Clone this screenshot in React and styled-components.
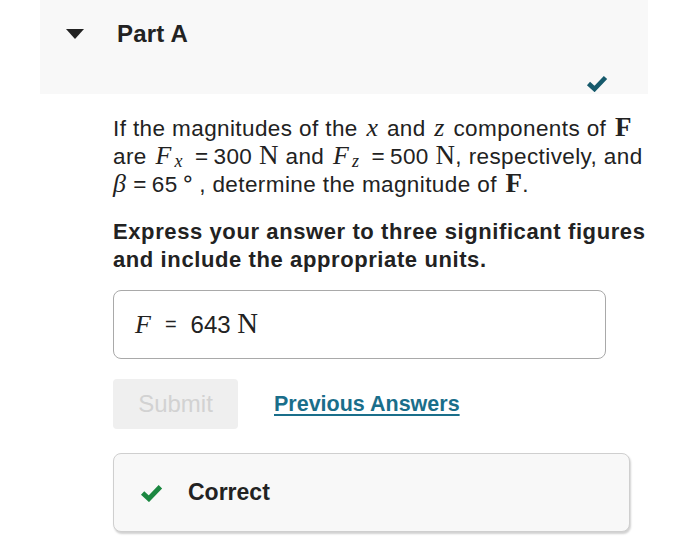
import styled, { createGlobalStyle } from 'styled-components';

const GlobalStyle = createGlobalStyle`
body {
    margin: 0;
    background: #ffffff;
    font-family: "Liberation Sans", Arial, sans-serif;
    color: #222222;
}
`;

const Check = ({ color, width, height }) => (
    <svg width={width} height={height} viewBox="0 0 22 17">
        <polyline points="2.5,8.5 8.5,14 19.5,2.5" fill="none" stroke={color} strokeWidth="4.6" strokeLinejoin="miter" />
    </svg>
);

const App = () => {
    return (
        <Page>
            <GlobalStyle />

            <PartHeader>
                <TitleRow>
                    <Caret />
                    <h2>Part A</h2>
                </TitleRow>
                <StatusRow>
                    <Check color="#165a6c" width={22} height={17} />
                </StatusRow>
            </PartHeader>

            <Content>
                <Question>
                    If the magnitudes of the <Mi $pad>x</Mi> and <Mi $pad>z</Mi> components of <Mb>F</Mb>
                    <br />
                    are <Mi $pad>F</Mi><Sub>x</Sub><Eq>=</Eq>300 <Mr>N</Mr> and <Mi $pad>F</Mi><Sub>z</Sub><Eq>=</Eq>500 <Mr>N</Mr>, respectively, and
                    <br />
                    <Mi>β</Mi><Eq $tight>=</Eq>65<Deg>∘</Deg>, determine the magnitude of <Mb>F</Mb>.
                </Question>

                <Instruction>
                    Express your answer to three significant figures and include the appropriate units.
                </Instruction>

                <AnswerBox>
                    <AnswerVar>F</AnswerVar>
                    <Equals>=</Equals>
                    <span>643 <Mr>N</Mr></span>
                </AnswerBox>

                <ActionRow>
                    <SubmitButton disabled>Submit</SubmitButton>
                    <PrevLink href="#">Previous Answers</PrevLink>
                </ActionRow>

                <Feedback>
                    <Check color="#1b8741" width={23} height={18} />
                    <span>Correct</span>
                </Feedback>
            </Content>
        </Page>
    )
}

const Page = styled.div`
width: 608px;
margin-left: 40px;
padding-bottom: 14px;
`;

const PartHeader = styled.div`
background: #f8f8f8;
height: 94px;
display: flex;
flex-direction: column;
box-sizing: border-box;
padding-top: 19px;
`;

const TitleRow = styled.div`
display: flex;
align-items: center;
padding-left: 26px;
gap: 33px;
height: 30px;

h2 {
    margin: 0;
    font-size: 24px;
    font-weight: 700;
    color: #222222;
    letter-spacing: 0.2px;
}
`;

const Caret = styled.span`
width: 0;
height: 0;
border-left: 9px solid transparent;
border-right: 9px solid transparent;
border-top: 10px solid #222222;
`;

const StatusRow = styled.div`
display: flex;
justify-content: flex-end;
padding-right: 40px;
margin-top: 26px;
`;

const Content = styled.div`
margin-left: 73px;
width: 545px;
`;

const Question = styled.p`
margin: 21px 0 0;
font-size: 22.5px;
line-height: 28px;
letter-spacing: 0.4px;
color: #222222;
white-space: nowrap;
`;

const Mi = styled.span`
font-family: "Liberation Serif", "DejaVu Serif", serif;
font-style: italic;
font-size: 1.15em;
line-height: 0;
margin: ${(p) => (p.$pad ? '0 2px' : '0')};
`;

const Mb = styled.span`
font-family: "Liberation Serif", "DejaVu Serif", serif;
font-weight: 700;
font-size: 1.2em;
line-height: 0;
margin-left: 2px;
`;

const Mr = styled.span`
font-family: "Liberation Serif", "DejaVu Serif", serif;
font-size: 1.2em;
line-height: 0;
`;

const Sub = styled.sub`
font-family: "Liberation Serif", "DejaVu Serif", serif;
font-style: italic;
font-size: 0.8em;
vertical-align: -3px;
line-height: 0;
margin-left: 1px;
`;

const Eq = styled.span`
margin: ${(p) => (p.$tight ? '0 5px 0 7px' : '0 5px 0 12px')};
`;

const Deg = styled.sup`
font-family: "DejaVu Sans", sans-serif;
font-size: 1em;
vertical-align: 6px;
line-height: 0;
margin: 0 4px 0 3px;
`;

const Instruction = styled.p`
margin: 19px 0 0;
font-size: 22px;
line-height: 28px;
font-weight: 700;
letter-spacing: 0.6px;
color: #222222;
width: 545px;
`;

const AnswerBox = styled.div`
margin-top: 16px;
width: 493px;
height: 69px;
box-sizing: border-box;
border: 1.5px solid #a9a9a9;
border-radius: 8px;
display: flex;
align-items: center;
padding-left: 21px;
font-size: 24px;
color: #222222;
`;

const AnswerVar = styled.span`
font-family: "Liberation Serif", "DejaVu Serif", serif;
font-style: italic;
font-size: 26px;
`;

const Equals = styled.span`
margin: 0 14px 0 14px;
font-size: 20px;
`;

const ActionRow = styled.div`
display: flex;
align-items: center;
gap: 36px;
margin-top: 20px;
`;

const SubmitButton = styled.button`
width: 125px;
height: 50px;
background: #efefef;
border: none;
border-radius: 4px;
color: #d2d2d2;
font-family: "Liberation Sans", Arial, sans-serif;
font-size: 24px;
padding: 0;
`;

const PrevLink = styled.a`
color: #1a6e8a;
font-size: 21.5px;
font-weight: 700;
text-decoration: underline;
text-underline-offset: 3px;
text-decoration-thickness: 2px;
`;

const Feedback = styled.div`
margin-top: 24px;
width: 517px;
height: 79px;
box-sizing: border-box;
background: #f8f8f8;
border: 1.5px solid #cfcfcf;
border-radius: 8px;
box-shadow: 1px 2px 2px rgba(0, 0, 0, 0.18);
display: flex;
align-items: center;
padding-left: 26px;
gap: 25px;

span {
    font-size: 23px;
    font-weight: 700;
    color: #222222;
}
`;

export default App;
